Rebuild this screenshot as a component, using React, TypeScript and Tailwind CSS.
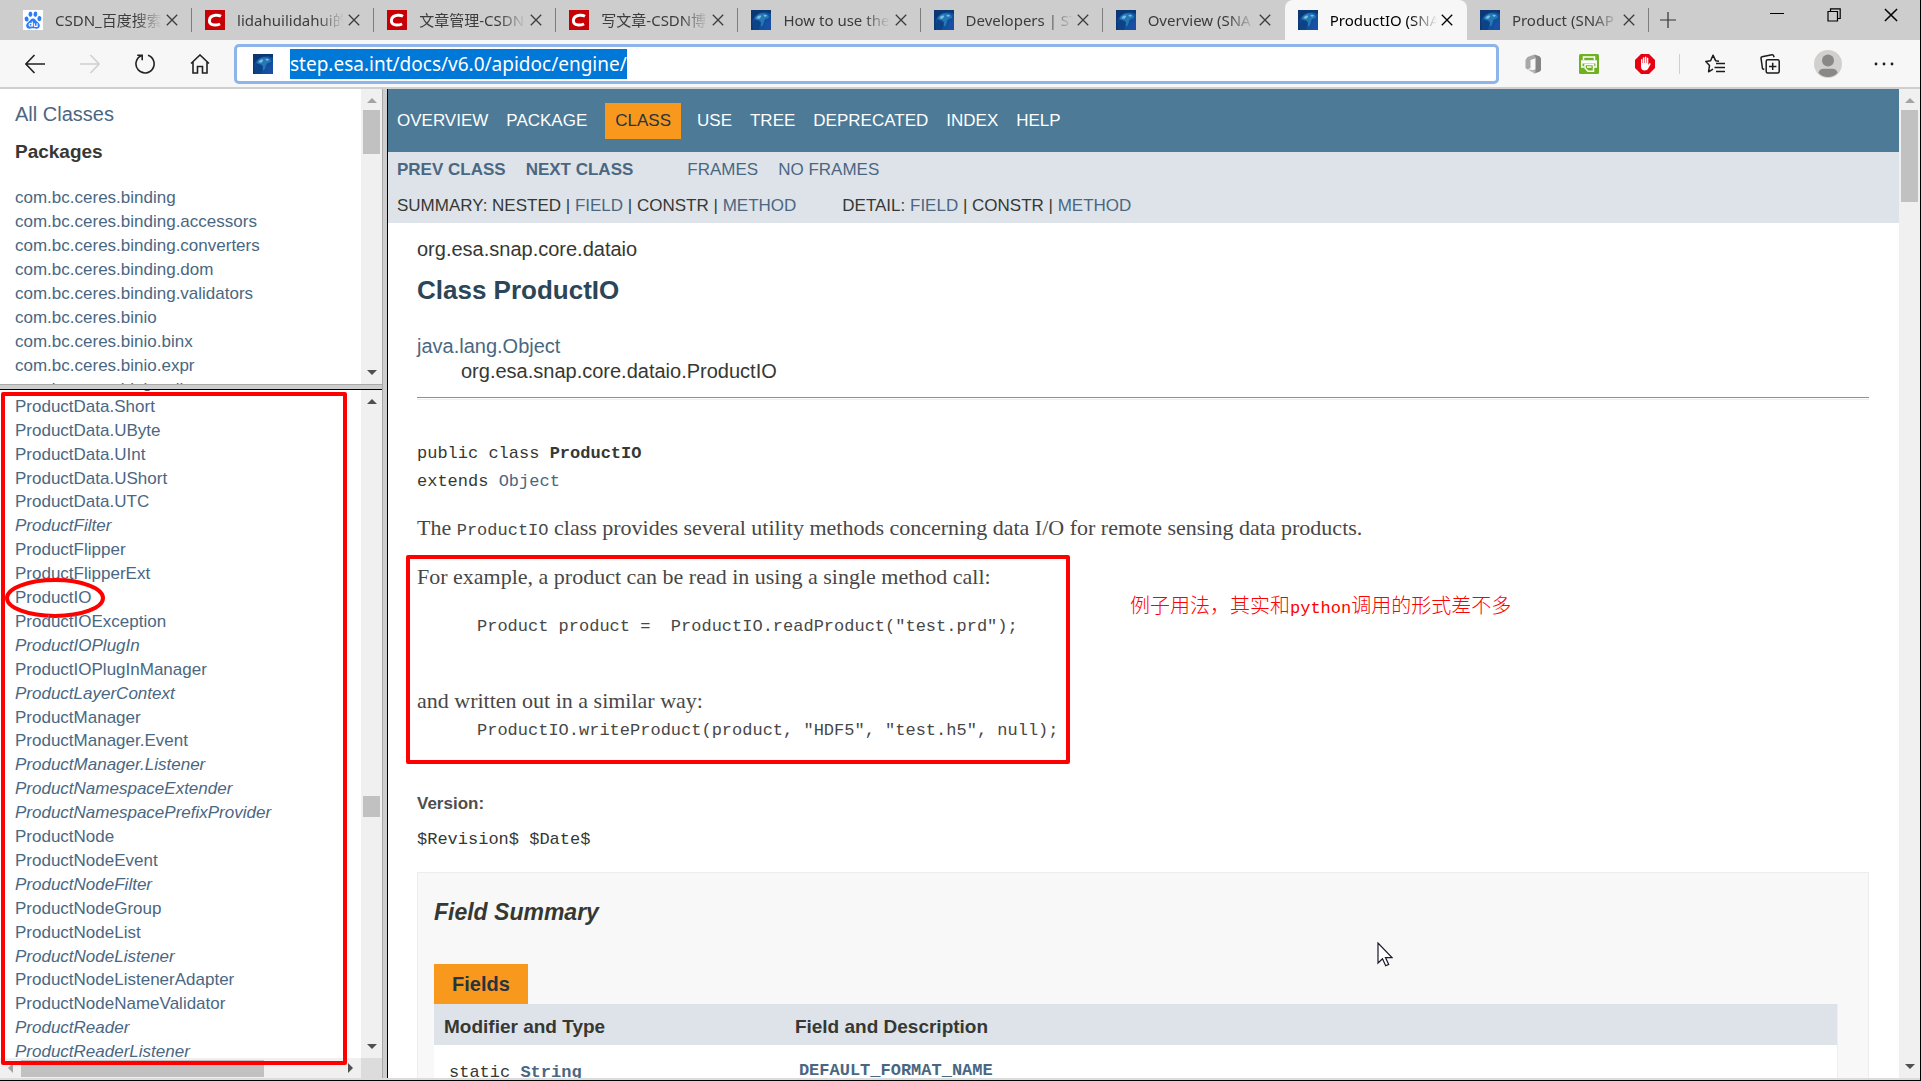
import type { ReactNode } from "react";
import clsx from "clsx";

type Icon = "baidu" | "csdn" | "earth";

const tabs: { title: string; icon: Icon; active?: boolean }[] = [
  { title: "CSDN_百度搜索", icon: "baidu" },
  { title: "lidahuilidahui的", icon: "csdn" },
  { title: "文章管理-CSDN", icon: "csdn" },
  { title: "写文章-CSDN博", icon: "csdn" },
  { title: "How to use the", icon: "earth" },
  { title: "Developers | ST", icon: "earth" },
  { title: "Overview (SNA", icon: "earth" },
  { title: "ProductIO (SNA", icon: "earth", active: true },
  { title: "Product (SNAP", icon: "earth" },
];

const packages = [
  "com.bc.ceres.binding",
  "com.bc.ceres.binding.accessors",
  "com.bc.ceres.binding.converters",
  "com.bc.ceres.binding.dom",
  "com.bc.ceres.binding.validators",
  "com.bc.ceres.binio",
  "com.bc.ceres.binio.binx",
  "com.bc.ceres.binio.expr",
  "com.bc.ceres.binio.util",
];

// interfaces are shown in italics
const classes: { name: string; iface?: boolean }[] = [
  { name: "ProductData.Long" },
  { name: "ProductData.Short" },
  { name: "ProductData.UByte" },
  { name: "ProductData.UInt" },
  { name: "ProductData.UShort" },
  { name: "ProductData.UTC" },
  { name: "ProductFilter", iface: true },
  { name: "ProductFlipper" },
  { name: "ProductFlipperExt" },
  { name: "ProductIO" },
  { name: "ProductIOException" },
  { name: "ProductIOPlugIn", iface: true },
  { name: "ProductIOPlugInManager" },
  { name: "ProductLayerContext", iface: true },
  { name: "ProductManager" },
  { name: "ProductManager.Event" },
  { name: "ProductManager.Listener", iface: true },
  { name: "ProductNamespaceExtender", iface: true },
  { name: "ProductNamespacePrefixProvider", iface: true },
  { name: "ProductNode" },
  { name: "ProductNodeEvent" },
  { name: "ProductNodeFilter", iface: true },
  { name: "ProductNodeGroup" },
  { name: "ProductNodeList" },
  { name: "ProductNodeListener", iface: true },
  { name: "ProductNodeListenerAdapter" },
  { name: "ProductNodeNameValidator" },
  { name: "ProductReader", iface: true },
  { name: "ProductReaderListener", iface: true },
];

function Favicon({ icon }: { icon: Icon }) {
  if (icon === "baidu") {
    return (
      <svg viewBox="0 0 20 20" className="size-5 shrink-0">
        <rect width="20" height="20" fill="#fff" />
        <g fill="#2f7df6">
          <ellipse cx="3.6" cy="9" rx="2" ry="2.6" transform="rotate(-10 3.6 9)" />
          <ellipse cx="7.4" cy="4.2" rx="1.9" ry="2.7" />
          <ellipse cx="12.4" cy="4.2" rx="1.9" ry="2.7" transform="rotate(8 12.4 4.2)" />
          <ellipse cx="16.4" cy="8.6" rx="2" ry="2.6" transform="rotate(10 16.4 8.6)" />
          <path d="M10 8.4c2.2 0 3 2.2 4.6 3.6 1.7 1.4 2.6 2.7 2.1 4.6-.6 2.3-3 2.3-4.4 1.9-1.5-.3-3.1-.3-4.6 0-1.4.4-3.8.4-4.4-1.9-.5-1.9.4-3.2 2.1-4.6C7 10.6 7.8 8.4 10 8.4z" />
        </g>
        <g fill="none" stroke="#fff" strokeWidth="1.1">
          <circle cx="7.6" cy="14.7" r="1.5" />
          <path d="M9.3 11.6v4.8M11.3 13.2v2.2q0 1 1 1h1.8v-3.2" />
        </g>
      </svg>
    );
  }
  if (icon === "csdn") {
    return (
      <svg viewBox="0 0 20 20" className="size-5 shrink-0">
        <rect width="20" height="20" fill="#c70005" />
        <path
          d="M16 6.2C14.5 5.4 12.4 5.1 10.3 5.3 6.8 5.6 4.6 7.7 4.4 10.5c-.2 3 2 4.7 5.4 4.6 1.9 0 3.7-.4 5.3-1.1"
          fill="none"
          stroke="#fff"
          strokeWidth="3"
        />
      </svg>
    );
  }
  return (
    <svg viewBox="0 0 20 20" className="size-5 shrink-0">
      <rect width="20" height="20" fill="#11509a" />
      <path d="M0 0h20v4C14 .5 4 2.5 1.5 11L2 20H0z" fill="#0b3875" />
      <path d="M9.5 12c1.5 2-1 4-1.5 8H2.5C1 15 2 11 4 9z" fill="#0d4386" />
      <path d="M3.5 8.5C5 4.5 9.5 2.5 14 3.5c2.5.6 4 2 4 4-1 1.5-3.5.8-4.5 2.500-.7 1.6-.8 4-2.3 6-1 1-1.7-.4-1.4-2 .3-1.700 0-2.800-1.500-3.600C6.500 9.800 4.500 10.500 3.500 8.500z" fill="#2577b6" />
      <path d="M5.5 8C6.5 6 8.5 5 10.3 6L9 8.3c-1 .8-2.5.6-3.5-.3zM12.3 5.2c1.2-.9 2.7-.7 3.7.5l-2 1.3z" fill="#79bfe2" />
      <path d="M15 12.5c2-.5 3.5-2 5-4V20h-7z" fill="#1a4fa6" />
    </svg>
  );
}

function CloseIcon({ className }: { className?: string }) {
  return (
    <svg viewBox="0 0 12 12" className={clsx("shrink-0", className)} fill="none" stroke="currentColor">
      <path d="M.8.8l10.4 10.4M11.2.8L.8 11.2" strokeWidth="1.3" />
    </svg>
  );
}

function TabStrip() {
  return (
    <div className="flex h-10 shrink-0 items-stretch bg-[#cdcdcd] pl-[10px] text-[#3c3c3c]">
      <div className="flex w-[1639px]">
        {tabs.map((tab, i) => (
          <div
            key={i}
            className={clsx(
              "relative flex min-w-0 flex-1 items-center pl-[13px] pr-[14px]",
              tab.active && "rounded-t-lg bg-[#f7f7f7] text-black"
            )}
          >
            <Favicon icon={tab.icon} />
            <span className="ml-3 w-[107px] overflow-hidden whitespace-nowrap text-[15px] leading-5 mask-r-from-75% font-['Noto_Sans','Noto_Sans_CJK_SC',sans-serif]">
              {tab.title}
            </span>
            <button aria-label={"Close " + tab.title} className="ml-auto">
              <CloseIcon className="size-3" />
            </button>
            {!tab.active && i !== 6 && (
              <span className="absolute right-0 top-2 h-6 w-px bg-[#7d7d7d]" />
            )}
          </div>
        ))}
      </div>
      <button aria-label="New tab" className="ml-[11px]">
        <svg viewBox="0 0 16 16" className="size-4" fill="none" stroke="#333">
          <path d="M8 0v16M0 8h16" strokeWidth="1.2" />
        </svg>
      </button>
      <div className="ml-auto flex items-start gap-[43px] pr-[22px] pt-2 text-black">
        <button aria-label="Minimize">
          <svg viewBox="0 0 14 14" className="size-[14px]" stroke="currentColor">
            <path d="M0 5.5h14" />
          </svg>
        </button>
        <button aria-label="Restore">
          <svg viewBox="0 0 14 14" className="size-[14px]" fill="none" stroke="currentColor" strokeWidth="1.2">
            <path d="M1 3.5h9.500V13H1zM3.5 3.5V.8h9.700v9.700h-2.700" />
          </svg>
        </button>
        <button aria-label="Close window">
          <CloseIcon className="size-[14px]" />
        </button>
      </div>
    </div>
  );
}

function Toolbar() {
  return (
    <div className="flex h-[49px] shrink-0 items-center border-b-2 border-[#cfcfcf] bg-[#f7f7f7] pl-[25px] pr-[26px]">
      <div className="flex w-[209px] items-center gap-[35px] text-[#222]">
        <button aria-label="Back">
          <svg viewBox="0 0 20 20" className="size-5" fill="none" stroke="currentColor" strokeWidth="1.6">
            <path d="M9.5 1L.9 10l8.600 9M1 10h19" />
          </svg>
        </button>
        <button aria-label="Forward" className="text-[#cfcfcf]">
          <svg viewBox="0 0 20 20" className="size-5" fill="none" stroke="currentColor" strokeWidth="1.5">
            <path d="M10.5 1l8.600 9-8.600 9M19 10H0" />
          </svg>
        </button>
        <button aria-label="Refresh">
          <svg viewBox="0 0 20 20" className="size-5" fill="none" stroke="currentColor" strokeWidth="1.6">
            <path d="M13 1.300a9.100 9.100 0 1 1-6.900.4M2.200 1.200h5v5" />
          </svg>
        </button>
        <button aria-label="Home">
          <svg viewBox="0 0 20 20" className="size-5" fill="none" stroke="currentColor" strokeWidth="1.6">
            <path d="M1 9.500L10 1l9 8.500M3 8v11h4.500v-6.500h5V19H17V8" />
          </svg>
        </button>
      </div>
      <div className="flex h-10 min-w-0 flex-1 items-center rounded-[5px] border-[3px] border-[#8fb4ea] bg-white pl-4">
        <Favicon icon="earth" />
        <input
          aria-label="Address"
          defaultValue="step.esa.int/docs/v6.0/apidoc/engine/"
          className="ml-[17px] h-[30px] field-sizing-content bg-[#0078d7] text-[19px] text-white outline-none font-['Noto_Sans',sans-serif]"
        />
      </div>
      <div className="flex items-center pl-[24px]">
        <button aria-label="Office" className="flex w-[56px]">
          <svg viewBox="0 0 20 20" className="size-5">
            <path d="M11.5.5L4.5 3 2.5 6v8l2 1.500L7.500 14V6L12 4.500V2z" fill="#a8a8a8" />
            <path d="M11.5.5l5 1.700 1.500 2v12l-1.500 1.600-5 1.700-1-1.500V16l2-.5v-11z" fill="#858585" />
            <path d="M4.5 15.5l8 .8v2L11.500 19.500z" fill="#b5b5b5" />
          </svg>
        </button>
        <button aria-label="Print" className="flex w-[56px]">
          <svg viewBox="0 0 20 20" className="size-5">
            <rect width="20" height="20" rx="1.5" fill="#6fb123" />
            <g fill="none" stroke="#fff" strokeWidth="1.5">
              <path d="M4.5 6V3h11v3M5 13H2.800V7h14.400v6H15" />
              <path d="M6 10.5h8.500v6.700H9L6 14z" />
              <path d="M8 13h4.500" />
            </g>
            <path d="M3 7h14v2.500H3z" fill="#fff" />
          </svg>
        </button>
        <button aria-label="AdBlock" className="flex w-[44px]">
          <svg viewBox="0 0 20 20" className="size-5">
            <path d="M6 0h8l6 6v8l-6 6H6l-6-6V6z" fill="#e60012" />
            <path
              d="M6 5.500q.8-.8 1.300 0V9h.5V3.800q.8-1 1.500 0V9h.5V3q.8-1 1.500 0v6h.5V4q.8-.9 1.500 0v7l1.200-1.700q1.200-.5 1.200.6L13.500 14q-1 2.500-3.700 2.500Q6 16.500 6 12.500z"
              fill="#fff"
            />
          </svg>
        </button>
        <span className="h-5 w-px bg-[#cfcfcf]" />
        <button aria-label="Favorites" className="ml-[25px] flex w-[55px]">
          <svg viewBox="0 0 20 20" className="size-5" fill="none" stroke="#1b1b1b" strokeWidth="1.5">
            <path d="M14 7.300l-3.300-.5L8 1.200 5.600 6.800.8 7.500l3.700 4-.9 6.300L8 15.200" strokeLinejoin="round" />
            <path d="M11 9.500h9M9.500 13.500H20M11 17.500h9" />
          </svg>
        </button>
        <button aria-label="Collections" className="flex w-[54px]">
          <svg viewBox="0 0 20 20" className="size-5" fill="none" stroke="#1b1b1b" strokeWidth="1.5">
            <rect x="6.2" y="5.7" width="13" height="13.3" rx="1.5" />
            <path d="M12.700 8.700v7.400M9 12.400h7.400M4.300 15.500L2.500 14.800 1 4.200q-.2-1.200 1-1.500l10-1.900q1.200-.2 1.600 1l.5 1.400" />
          </svg>
        </button>
        <button aria-label="Profile" className="flex w-[60px]">
          <svg viewBox="0 0 28 28" className="size-7">
            <circle cx="14" cy="14" r="14" fill="#d2d0ce" />
            <circle cx="14" cy="10.5" r="6" fill="#8a8886" />
            <path d="M4.500 23q1-4.200 5-4.200h9q4 0 5 4.200a13.500 13.500 0 0 1-19 0z" fill="#8a8886" />
          </svg>
        </button>
        <button aria-label="Settings and more" className="flex">
          <svg viewBox="0 0 20 4" className="h-1 w-5" fill="#1b1b1b">
            <circle cx="2" cy="2" r="1.4" />
            <circle cx="10" cy="2" r="1.4" />
            <circle cx="18" cy="2" r="1.4" />
          </svg>
        </button>
      </div>
    </div>
  );
}

function Arrow({ dir, muted }: { dir: "up" | "down" | "left" | "right"; muted?: boolean }) {
  const paths = {
    up: "M0 7l5-5 5 5z",
    down: "M0 3l5 5 5-5z",
    left: "M7 0L2 5l5 5z",
    right: "M3 0l5 5-5 5z",
  };
  return (
    <svg viewBox="0 0 10 10" className="size-[10px] shrink-0" fill={muted ? "#a3a3a3" : "#505050"}>
      <path d={paths[dir]} />
    </svg>
  );
}

function VScroll({ top, size, muted }: { top: number; size: number; muted?: boolean }) {
  return (
    <div className="flex w-[21px] shrink-0 flex-col items-center bg-[#f0f0f0] py-[7px]">
      <Arrow dir="up" muted={muted} />
      <div className="w-[17px] bg-[#c1c1c1]" style={{ marginTop: top, height: size }} />
      <div className="mt-auto flex">
        <Arrow dir="down" />
      </div>
    </div>
  );
}

function PackageFrame() {
  return (
    <nav aria-label="Packages" className="flex h-[296px] shrink-0 border-b border-[#a9a9a9]">
      <div className="flex-1 overflow-hidden pl-[15px] pt-[13px]">
        <a href="#all" className="block text-[20px] leading-6">All Classes</a>
        <h2 className="mt-[14px] text-[19px] font-bold leading-6 text-[#353833]">Packages</h2>
        <ul className="mt-[22px] text-[17px] leading-6">
          {packages.map((p) => (
            <li key={p}>
              <a href={"#" + p}>{p}</a>
            </li>
          ))}
        </ul>
      </div>
      <VScroll top={4} size={44} muted />
    </nav>
  );
}

function ClassFrame() {
  return (
    <nav aria-label="Classes" className="relative flex min-h-0 flex-1 flex-col">
      <div className="flex min-h-0 flex-1">
        <div className="flex min-w-0 flex-1 flex-col overflow-hidden pl-[15px]">
          {/* list is scrolled part way through a row */}
          <ul className="-mb-[6px] -mt-[19px] grid flex-1 auto-rows-fr text-[17px] leading-[23px]">
            {classes.map((c) => (
              <li key={c.name} className="min-h-0 whitespace-nowrap">
                <a href={"#" + c.name} className={clsx("relative", c.iface && "italic")}>
                  {c.name}
                  {c.name === "ProductIO" && (
                    <svg viewBox="0 0 100 40" className="absolute -left-[10px] -top-[10px] h-10 w-[100px]" fill="none">
                      <ellipse cx="50" cy="20" rx="48" ry="18" stroke="#f00" strokeWidth="4" />
                    </svg>
                  )}
                </a>
              </li>
            ))}
          </ul>
        </div>
        <VScroll top={389} size={21} />
      </div>
      <div className="flex h-5 shrink-0 bg-[#f0f0f0]">
        <div className="flex flex-1 items-center px-[6px]">
          <Arrow dir="left" muted />
          <div className="ml-[5px] h-[17px] w-[243px] bg-[#c1c1c1]" />
          <div className="ml-auto flex">
            <Arrow dir="right" />
          </div>
        </div>
        <div className="w-[21px] bg-[#dcdcdc]" />
      </div>
      <div className="pointer-events-none absolute bottom-[13px] left-px right-[35px] top-[2px] rounded-xs border-4 border-[#f00]" />
    </nav>
  );
}

function NavLink({ children }: { children: ReactNode }) {
  return <a href={"#" + children}>{children}</a>;
}

function DocHeader() {
  return (
    <header className="text-[17px]">
      <nav className="flex h-[63px] items-center bg-[#4d7a97] pl-[9px] text-white">
        <a href="#overview" className="mr-[18px]">OVERVIEW</a>
        <a href="#package" className="mr-[18px]">PACKAGE</a>
        <span className="mr-4 bg-[#f8981d] px-[10px] py-[6px] leading-6 text-[#253441]">CLASS</span>
        <a href="#use" className="mr-[18px]">USE</a>
        <a href="#tree" className="mr-[18px]">TREE</a>
        <a href="#deprecated" className="mr-[18px]">DEPRECATED</a>
        <a href="#index" className="mr-[18px]">INDEX</a>
        <a href="#help">HELP</a>
      </nav>
      <div className="h-[71px] bg-[#dee3e9] pl-[9px] pt-[6px] leading-6 [&_a]:text-[#4a6782]">
        <div className="flex">
          <a href="#prev" className="mr-5 font-bold">PREV CLASS</a>
          <a href="#next" className="mr-[54px] font-bold">NEXT CLASS</a>
          <a href="#frames" className="mr-5">FRAMES</a>
          <a href="#noframes">NO FRAMES</a>
        </div>
        <div className="mt-3 flex gap-[46px]">
          <p>
            SUMMARY: NESTED | <NavLink>FIELD</NavLink> | CONSTR | <NavLink>METHOD</NavLink>
          </p>
          <p>
            DETAIL: <NavLink>FIELD</NavLink> | CONSTR | <NavLink>METHOD</NavLink>
          </p>
        </div>
      </div>
    </header>
  );
}

const monoFont = "font-['Liberation_Mono',monospace] text-[17px]";
const mono = monoFont + " leading-7";
const serif = "font-['Liberation_Serif',serif] text-[22px] leading-7 text-[#474747]";

function Description() {
  return (
    <>
      <div className={clsx(mono, "mt-10")}>
        <p>public class <b>ProductIO</b></p>
        <p>extends <a href="#Object">Object</a></p>
      </div>
      <p className={clsx(serif, "mt-[18px]")}>
        The <code className={clsx(monoFont, "leading-none")}>ProductIO</code> class provides several
        utility methods concerning data I/O for remote sensing data products.
      </p>
      <div className="relative mt-[21px]">
        <p className={serif}>For example, a product can be read in using a single method call:</p>
        <pre className={clsx(mono, "mt-[22px] pl-[60px] text-[#474747]")}>
          {'Product product =  ProductIO.readProduct("test.prd");'}
        </pre>
        <p className={clsx(serif, "mt-[46px]")}>and written out in a similar way:</p>
        <pre className={clsx(mono, "mt-[2px] pl-[60px] text-[#474747]")}>
          {'ProductIO.writeProduct(product, "HDF5", "test.h5", null);'}
        </pre>
        <div className="pointer-events-none absolute -bottom-[19px] -left-[11px] -top-[8px] w-[664px] rounded-xs border-4 border-[#f00]" />
        <p className="absolute left-[713px] top-[28px] whitespace-nowrap text-[20px] font-light leading-7 text-[#f00] font-['Noto_Sans_CJK_SC',sans-serif]">
          例子用法，其实和<span className="text-[17px] font-['Liberation_Mono',monospace]">python</span>调用的形式差不多
        </p>
      </div>
      <dl className="mt-[47px]">
        <dt className="text-[17px] font-bold leading-6 text-[#4e4e4e]">Version:</dt>
        <dd className={clsx(mono, "mt-[10px]")}>$Revision$ $Date$</dd>
      </dl>
    </>
  );
}

function FieldSummary() {
  return (
    <section className="relative mt-[18px] border border-[#ededed] bg-[#f8f8f8] pl-4 pr-[30px] pt-[25px]">
      <h3 className="text-[23px] font-bold italic leading-7">Field Summary</h3>
      <table className="mt-[38px] w-full border-r border-[#eee] bg-white text-left">
        <caption className="bg-[#f8f8f8] text-left">
          <span className="inline-block bg-[#f8981d] px-[18px] py-2 align-top text-[20px] font-bold leading-6 text-[#253441]">
            Fields
          </span>
        </caption>
        <thead>
          <tr className="h-[41px] bg-[#dee3e9] text-[19px] leading-6">
            <th className="w-1/4 pl-[10px] pt-1">Modifier and Type</th>
            <th className="pl-[10px] pt-1">Field and Description</th>
          </tr>
        </thead>
        <tbody>
          <tr className={mono}>
            <td className="pl-[15px] pt-3">static <a href="#String" className="font-bold">String</a></td>
            <td className="pb-1 pl-[14px] pt-3">
              <a href="#DEFAULT_FORMAT_NAME" className="font-bold">DEFAULT_FORMAT_NAME</a>
            </td>
          </tr>
        </tbody>
      </table>
      <svg viewBox="0 0 16 25" className="absolute left-[959px] top-[69px] h-[25px] w-4">
        <path d="M1 1v20l4.500-4.300 3.200 7 3-1.300-3.200-6.800H15z" fill="#fff" stroke="#1a1a2b" strokeWidth="1.2" />
      </svg>
    </section>
  );
}

export default function App() {
  return (
    <div className="flex h-screen flex-col overflow-hidden border-b border-r border-black bg-white text-[#353833] font-['Liberation_Sans',Arial,sans-serif]">
      <TabStrip />
      <Toolbar />
      <div className="flex min-h-0 flex-1 border-b-2 border-[#dcdcdc]">
        <aside className="flex w-[383px] shrink-0 flex-col border-r border-[#a9a9a9] text-[#4a6782]">
          <PackageFrame />
          <div className="h-[5px] shrink-0 border-b border-black bg-[#cdcdcd]" />
          <ClassFrame />
        </aside>
        <div className="w-[5px] shrink-0 border-r border-black bg-[#cdcdcd]" />
        <main className="min-w-0 flex-1 overflow-hidden">
          <DocHeader />
          <div className="pl-[29px] pr-[30px] pt-[14px] [&_a]:text-[#4a6782]">
            <p className="text-[20px] leading-6">org.esa.snap.core.dataio</p>
            <h1 className="mt-[13px] text-[26px] font-bold leading-8 text-[#2c4557]">Class ProductIO</h1>
            <ul className="mt-[28px] text-[20px] leading-[25px]">
              <li><a href="#Object">java.lang.Object</a></li>
              <li className="pl-11">org.esa.snap.core.dataio.ProductIO</li>
            </ul>
            <hr className="mt-[13px] h-[3px] border-b border-t border-b-[#eee] border-t-[#8f8f8f]" />
            <Description />
            <FieldSummary />
          </div>
        </main>
        <VScroll top={4} size={92} muted />
      </div>
    </div>
  );
}
